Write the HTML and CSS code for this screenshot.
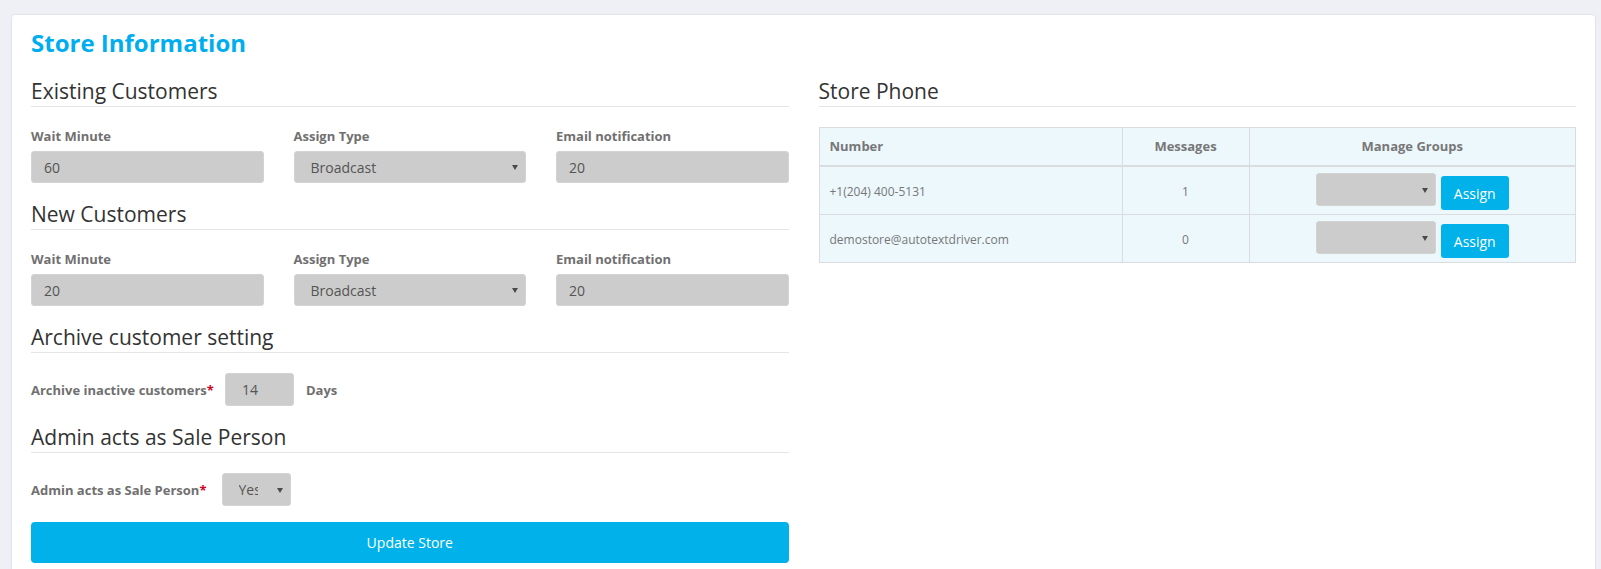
FILE: index.html
```html
<!DOCTYPE html>
<html lang="en">
<head>
<meta charset="utf-8">
<title>Store Information</title>
<link rel="stylesheet" href="styles.css">
</head>
<body>
<div class="page">
  <div class="card">
    <h1 class="title">Store Information</h1>
    <div class="row">
      <div class="col">
        <h2 class="section-heading">Existing Customers</h2>
        <div class="fields">
          <div class="field">
            <label class="label">Wait Minute</label>
            <input class="control" type="text" value="60">
          </div>
          <div class="field">
            <label class="label">Assign Type</label>
            <div class="select-wrap">
              <select class="control select"><option>Broadcast</option></select>
            </div>
          </div>
          <div class="field">
            <label class="label">Email notification</label>
            <input class="control" type="text" value="20">
          </div>
        </div>

        <h2 class="section-heading next">New Customers</h2>
        <div class="fields">
          <div class="field">
            <label class="label">Wait Minute</label>
            <input class="control" type="text" value="20">
          </div>
          <div class="field">
            <label class="label">Assign Type</label>
            <div class="select-wrap">
              <select class="control select"><option>Broadcast</option></select>
            </div>
          </div>
          <div class="field">
            <label class="label">Email notification</label>
            <input class="control" type="text" value="20">
          </div>
        </div>

        <h2 class="section-heading next">Archive customer setting</h2>
        <div class="inline-row">
          <label class="label inline-label">Archive inactive customers<span class="req">*</span></label>
          <input class="control small-input" type="text" value="14">
          <span class="label days">Days</span>
        </div>

        <h2 class="section-heading next">Admin acts as Sale Person</h2>
        <div class="inline-row">
          <label class="label inline-label">Admin acts as Sale Person<span class="req">*</span></label>
          <div class="select-wrap yes-wrap">
            <select class="control select yes-select"><option>Yes</option></select>
          </div>
        </div>

        <button class="btn-update" type="button">Update Store</button>
      </div>

      <div class="col">
        <h2 class="section-heading">Store Phone</h2>
        <table class="phone-table">
          <colgroup>
            <col class="c-number">
            <col class="c-messages">
            <col class="c-groups">
          </colgroup>
          <thead>
            <tr>
              <th class="left">Number</th>
              <th>Messages</th>
              <th>Manage Groups</th>
            </tr>
          </thead>
          <tbody>
            <tr>
              <td class="left">+1(204) 400-5131</td>
              <td>1</td>
              <td>
                <div class="assign-group">
                  <div class="select-wrap group-wrap">
                    <select class="control select group-select"><option></option></select>
                  </div>
                  <button class="btn-assign" type="button">Assign</button>
                </div>
              </td>
            </tr>
            <tr>
              <td class="left">demostore@autotextdriver.com</td>
              <td>0</td>
              <td>
                <div class="assign-group">
                  <div class="select-wrap group-wrap">
                    <select class="control select group-select"><option></option></select>
                  </div>
                  <button class="btn-assign" type="button">Assign</button>
                </div>
              </td>
            </tr>
          </tbody>
        </table>
      </div>
    </div>
  </div>
</div>
</body>
</html>
```

FILE: styles.css
```css
* {
  box-sizing: border-box;
}

html, body {
  margin: 0;
  padding: 0;
  background: #eff0f5;
  font-family: "Open Sans", "Liberation Sans", Arial, sans-serif;
  color: #333;
}

.page {
  padding: 14px 5px 0 11px;
}

.card {
  background: #fff;
  border: 1px solid #e2e3e9;
  border-radius: 4px;
  padding: 0 19px 20px 19px;
  min-height: 600px;
}

.title {
  margin: 11px 0 17px;
  font-size: 24px;
  line-height: 33px;
  font-weight: 700;
  color: #00aeef;
}

.row {
  display: grid;
  grid-template-columns: 1fr 1fr;
  column-gap: 30px;
  align-items: start;
}

.section-heading {
  margin: 0;
  font-size: 21px;
  line-height: 30px;
  font-weight: 400;
  color: #333;
  border-bottom: 1px solid #e5e5e5;
}

.section-heading.next {
  margin-top: 16px;
}

.fields {
  display: grid;
  grid-template-columns: repeat(3, 1fr);
  column-gap: 30px;
  margin-top: 20px;
}

.field {
  display: flex;
  flex-direction: column;
}

.label {
  display: block;
  font-size: 13px;
  line-height: 18px;
  font-weight: 700;
  color: #707070;
  margin-bottom: 6px;
}

.control {
  display: block;
  width: 100%;
  height: 32px;
  margin: 0;
  padding: 0 12px;
  background: #cccccc;
  border: 1px solid #d3d3d3;
  border-radius: 3px;
  font-family: "Open Sans", "Liberation Sans", Arial, sans-serif;
  font-size: 14px;
  color: #555;
  outline: none;
}

.select {
  -webkit-appearance: none;
  appearance: none;
  padding: 0 26px 0 16px;
}

.select-wrap {
  position: relative;
}

.select-wrap::after {
  content: "";
  position: absolute;
  right: 8px;
  top: 50%;
  margin-top: -2px;
  border-left: 3px solid transparent;
  border-right: 3px solid transparent;
  border-top: 5px solid #4a4a4a;
  pointer-events: none;
}

.inline-row {
  display: flex;
  align-items: center;
  margin-top: 20px;
}

.inline-label {
  margin: 0;
}

.req {
  color: #d0021b;
}

.small-input {
  width: 69px;
  height: 33px;
  margin-left: 11px;
  padding: 0 16px;
}

.days {
  margin: 0 0 0 12px;
}

.yes-wrap {
  margin-left: 15px;
}

.yes-select {
  width: 69px;
  height: 33px;
  padding: 0 32px 0 16px;
}

.btn-update {
  display: block;
  width: 100%;
  height: 41px;
  margin-top: 16px;
  background: #00b1ea;
  border: none;
  border-radius: 4px;
  color: #fff;
  font-family: "Open Sans", "Liberation Sans", Arial, sans-serif;
  font-size: 14px;
}

.phone-table {
  width: 100%;
  margin-top: 20px;
  border-collapse: collapse;
  table-layout: fixed;
  background: #edf8fd;
  border: 1px solid #dadcdf;
}

.c-number { width: 303px; }
.c-messages { width: 127px; }

.phone-table th,
.phone-table td {
  border: 1px solid #dadcdf;
  text-align: center;
  vertical-align: middle;
}

.phone-table th {
  padding: 9px 10px 10px;
  font-size: 13px;
  line-height: 18px;
  font-weight: 700;
  color: #777;
  border-bottom: 2px solid #dadcdf;
}

.phone-table td {
  padding: 6px 10px 4px;
  font-size: 12px;
  line-height: 18px;
  color: #777;
}

.phone-table .left {
  text-align: left;
}

.assign-group {
  display: flex;
  justify-content: center;
  align-items: flex-start;
  gap: 5px;
  height: 37px;
}

.group-wrap {
  width: 120px;
}

.group-select {
  height: 33px;
}

.btn-assign {
  margin-top: 3px;
  width: 68px;
  height: 34px;
  padding: 0;
  background: #00b1ea;
  border: none;
  border-radius: 3px;
  color: #fff;
  font-family: "Open Sans", "Liberation Sans", Arial, sans-serif;
  font-size: 14px;
}
```
